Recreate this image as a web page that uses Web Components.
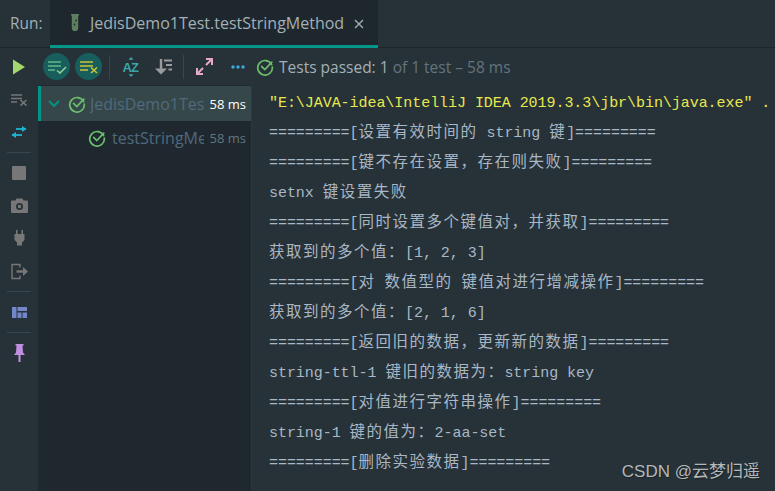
<!DOCTYPE html>
<html><head><meta charset="utf-8"><style>
html,body{margin:0;padding:0;background:#263238;overflow:hidden}
</style></head><body>
<run-panel>
<tab-bar label="Run:" title-text="JedisDemo1Test.testStringMethod"></tab-bar>
<tool-bar></tool-bar>
<side-rail></side-rail>
<test-tree>
<tree-row selected name="JedisDemo1Tes" time="58 ms"></tree-row>
<tree-row child name="testStringMe" time="58 ms"></tree-row>
</test-tree>
<console-view>
<c-line y>"E:\JAVA-idea\IntelliJ IDEA 2019.3.3\jbr\bin\java.exe" .</c-line>
<c-line>=========[设置有效时间的 string 键]=========</c-line>
<c-line>=========[键不存在设置，存在则失败]=========</c-line>
<c-line>setnx 键设置失败</c-line>
<c-line>=========[同时设置多个键值对，并获取]=========</c-line>
<c-line>获取到的多个值：[1, 2, 3]</c-line>
<c-line>=========[对 数值型的 键值对进行增减操作]=========</c-line>
<c-line>获取到的多个值：[2, 1, 6]</c-line>
<c-line>=========[返回旧的数据，更新新的数据]=========</c-line>
<c-line>string-ttl-1 键旧的数据为：string key</c-line>
<c-line>=========[对值进行字符串操作]=========</c-line>
<c-line>string-1 键的值为：2-aa-set</c-line>
<c-line>=========[删除实验数据]=========</c-line>
</console-view>
<water-mark>CSDN @云梦归遥</water-mark>
</run-panel>
<script>
const ICONS={
check:(c)=>`<svg width="18" height="18" viewBox="0 0 18 18" fill="none"><path d="M15.6 6.6A7.3 7.3 0 1 0 16.3 9" stroke="${c}" stroke-width="1.7" stroke-linecap="round"/><path d="M5.6 8.4l3.2 3.2 7-7.4" stroke="${c}" stroke-width="1.7" stroke-linecap="round"/></svg>`
};
function def(name,css,html){
 customElements.define(name,class extends HTMLElement{
  connectedCallback(){ if(this.shadowRoot)return;
   const r=this.attachShadow({mode:'open'});
   r.innerHTML=`<style>${css}</style>`+(typeof html==='function'?html(this):html);
  }
 });
}
def('run-panel',`:host{display:grid;grid-template-columns:38px 214px 1fr;grid-template-rows:48px 37px 406px;width:775px;height:491px;position:relative;overflow:hidden;background:#263238;font-family:"Open Sans","Noto Sans CJK SC",sans-serif}`,`<slot></slot>`);
def('tab-bar',`:host{display:flex;grid-column:1/4;background:#263238;border-bottom:1px solid #1d262b;box-sizing:border-box;height:48px;color:#a7b2b8;font-size:16px}
 .l{width:50px;box-sizing:border-box;padding-left:10px;display:flex;align-items:center;height:47px;color:#a4b0b6;font-size:15.400px}
 .t{width:328px;height:48px;box-sizing:border-box;background:#1e272d;border-bottom:3px solid #009688;display:flex;align-items:center;padding:0 0 0 21px;color:#a4b0b6}
 svg{margin-right:11px;flex:none}`,
 e=>`<div class="l">${e.getAttribute('label')}</div><div class="t"><svg width="8" height="17" viewBox="0 0 8 17"><path d="M0 0h8v1.500H7.200V14a3.200 3.200 0 0 1-6.400 0V1.500H0z" fill="#5f7d5f"/><circle cx="5" cy="6.500" r="1" fill="#2b3a33"/><circle cx="3.500" cy="10.500" r="1" fill="#2b3a33"/></svg><span>${e.getAttribute('title-text')}</span><svg style="margin:2px 0 0 10px" width="10" height="10" viewBox="0 0 10 10"><path d="M1 1l8 8M9 1l-8 8" stroke="#a4b0b6" stroke-width="1.300"/></svg></div>`);
def('tool-bar',`:host{display:flex;grid-column:1/4;align-items:center;height:37px;background:#263238;box-sizing:border-box;padding-left:10px;color:#a7b2b8;font-size:15.500px;white-space:nowrap}
 .b{flex:none;display:flex;align-items:center;justify-content:center}
 .c{width:27px;height:27px;border-radius:50%;background:#185e5d}
 .s{width:1px;height:24px;background:#37474f;flex:none}
 .m{color:#62747e}`,
 `<div class="b" style="width:18px"><svg width="14" height="16" viewBox="0 0 14 16"><path d="M1 .5 13 8 1 15.500z" fill="#a4d86c"/></svg></div>
 <div class="b c" style="margin-left:15px"><svg width="20" height="14" viewBox="0 0 20 14" fill="none"><path d="M1 2h13M1 6h13M1 10h7" stroke="#63b88a" stroke-width="1.600"/><path d="M10 10.500l3 2.500 6-6" stroke="#8fd08f" stroke-width="1.600"/></svg></div>
 <div class="b c" style="margin-left:5px"><svg width="20" height="14" viewBox="0 0 20 14" fill="none"><path d="M1 2h13M1 6h13M1 10h8" stroke="#cfc234" stroke-width="1.600"/><path d="M12 7.500l6 5.500M18 7.500l-6 5.500" stroke="#cfc234" stroke-width="1.600"/></svg></div>
 <div class="s" style="margin-left:7px"></div>
 <div class="b" style="width:18px;margin-left:12px"><svg width="17" height="20" viewBox="0 0 17 20"><path d="M8 0 10.500 2.800H5.500zM8 20 5.500 17.200H10.500z" fill="#3aa5ab"/><text x="-.5" y="15" font-family="Liberation Sans" font-weight="700" font-size="13" fill="#3aa5ab">A</text><text x="8" y="15" font-family="Liberation Sans" font-weight="700" font-size="13" fill="#3aa5ab">Z</text></svg></div>
 <div class="b" style="width:20px;margin-left:14px"><svg width="18" height="16" viewBox="0 0 18 16" fill="none"><path d="M6 0v12" stroke="#9a9a9a" stroke-width="2.400"/><path d="M0 9.500h12L6 15.500z" fill="#9a9a9a"/><path d="M9 1.500h8M11 6h6M13.500 10.500h3.500" stroke="#9a9a9a" stroke-width="2"/></svg></div>
 <div class="s" style="margin-left:9px"></div>
 <div class="b" style="width:18px;margin-left:11px"><svg width="17" height="17" viewBox="0 0 17 17" fill="none"><path d="M10 1h6v6M16 1 10 7" stroke="#e8a9c4" stroke-width="2"/><path d="M7 16H1v-6M1 16l6-6" stroke="#e8a9c4" stroke-width="2"/></svg></div>
 <div class="b" style="width:16px;margin-left:17px"><svg width="14" height="4" viewBox="0 0 14 4"><circle cx="2" cy="2" r="1.700" fill="#3fa9e0"/><circle cx="7" cy="2" r="1.700" fill="#3fa9e0"/><circle cx="12" cy="2" r="1.700" fill="#3fa9e0"/></svg></div>
 <div class="b" style="margin-left:10px;width:18px">${ICONS.check('#6cbf6c')}</div>
 <span style="margin-left:5px;color:#a4b0b6">Tests passed: <span>1</span> <span class="m">of 1 test – 58 ms</span></span>`);
def('side-rail',`:host{display:flex;flex-direction:column;align-items:center;background:#263238;box-sizing:border-box;padding-top:5px;width:38px}
 .b{height:20px;display:flex;align-items:center;justify-content:center;flex:none}
 .s{width:24px;height:1px;background:#37474f;flex:none}`,
 `<div class="b"><svg width="17" height="12" viewBox="0 0 17 12" fill="none"><path d="M0 1h11M0 4.500h11M0 8h6" stroke="#777" stroke-width="1.400"/><path d="M9.500 6l6 5.500M15.500 6l-6 5.500" stroke="#777" stroke-width="1.600"/></svg></div>
 <div class="b" style="margin-top:12px"><svg width="16" height="12" viewBox="0 0 16 12" fill="none"><path d="M5 3h10" stroke="#1cb4d0" stroke-width="1.800"/><path d="M11 0l4.500 3L11 6z" fill="#1cb4d0"/><path d="M1 9h10" stroke="#1cb4d0" stroke-width="1.800"/><path d="M5 6 .500 9 5 12z" fill="#1cb4d0"/></svg></div>
 <div class="s" style="margin-top:10px"></div>
 <div class="b" style="margin-top:10px"><div style="width:14px;height:14px;background:#777;border-radius:1px"></div></div>
 <div class="b" style="margin-top:12px"><svg width="17" height="15" viewBox="0 0 17 15"><path fill-rule="evenodd" d="M1 2.500h3.500L5.500.500h6l1 2h3.500a1 1 0 0 1 1 1V14a1 1 0 0 1-1 1H1a1 1 0 0 1-1-1V3.500a1 1 0 0 1 1-1zM8.500 5a3.500 3.500 0 1 0 0 7 3.500 3.500 0 0 0 0-7zm0 1.700a1.800 1.800 0 1 1 0 3.600 1.800 1.800 0 0 1 0-3.600z" fill="#777"/></svg></div>
 <div class="b" style="margin-top:13px"><svg width="11" height="16" viewBox="0 0 11 16"><path d="M2 0h1.500v4h4V0H9v4h1.500v6L8 12.500V15.500H3V12.500L.500 10V4H2z" fill="#777"/></svg></div>
 <div class="b" style="margin-top:13px"><svg width="17" height="17" viewBox="0 0 17 17" fill="none"><path d="M9 4.500V1.500H1v14h8v-3" stroke="#777" stroke-width="1.400"/><path d="M5.500 8.500h7" stroke="#777" stroke-width="2.400"/><path d="M12 4l5 4.500-5 4.500z" fill="#777"/></svg></div>
 <div class="s" style="margin-top:10px"></div>
 <div class="b" style="margin-top:10px"><svg width="15" height="11" viewBox="0 0 15 11" fill="#7286c8"><rect width="4.500" height="11"/><rect x="5.500" width="9.500" height="4"/><rect x="5.500" y="5.500" width="4" height="5.500"/><rect x="10.500" y="5.500" width="4.500" height="5.500"/></svg></div>
 <div class="s" style="margin-top:10px"></div>
 <div class="b" style="margin-top:10px"><svg width="11" height="18" viewBox="0 0 11 18"><path d="M1.500 0h8v1.500H8.500L9 8.500 11 11H.0L2 8.500 2.500 1.500H1.500zM4.500 11h2v7h-2z" fill="#c18fe0"/></svg></div>`);
def('test-tree',`:host{display:block;background:#1f282e;border-right:1px solid #2b393f;box-sizing:border-box;width:214px;padding-top:1px;overflow:hidden}`,`<slot></slot>`);
def('tree-row',`:host{display:flex;align-items:center;height:35px;box-sizing:border-box;font-size:16px;white-space:nowrap}
 :host([selected]){background:#36474a;border-left:3px solid #009688;padding-left:7px}
 :host([child]){padding-left:50px;height:34px}
 .n{color:#4f6a7c;flex:1;overflow:hidden;margin-left:4px;min-width:0}
 .t{color:#fff;font-size:13px;margin:0 5px 0 6px;flex:none}
 :host([child]) .t{color:#61757f}
 :host([child]) .n{margin-left:6px}`,
 e=>{const ch=e.hasAttribute('child');return `${ch?'':`<svg width="12" height="8" viewBox="0 0 12 8" fill="none" style="margin-right:8px"><path d="M1 1l5 5 5-5" stroke="#009688" stroke-width="1.800"/></svg>`}${ICONS.check('#6cbf6c')}<span class="n">${e.getAttribute('name')}</span><span class="t">${e.getAttribute('time')}</span>`});
def('console-view',`:host{display:block;background:#263238;padding:4px 0 0 17px;box-sizing:border-box;overflow:hidden}`,`<slot></slot>`);
customElements.define('c-line',class extends HTMLElement{
 connectedCallback(){ if(this.shadowRoot)return;
  const r=this.attachShadow({mode:'open'});
  const t=this.textContent;
  const esc=s=>s.replace(/&/g,'&amp;').replace(/</g,'&lt;');
  const parts=t.split(/([\u3000-\u9fff\uff00-\uffef]+)/).map((p,i)=>i%2?`<span class="z">${esc(p)}</span>`:esc(p)).join('');
  r.innerHTML=`<style>:host{display:block;height:30px;line-height:30px;white-space:pre;font-family:"Liberation Mono",monospace;font-size:15px;letter-spacing:-.05px;color:#a9b7c6}
  :host([y]){color:#e8e84e}
  .z{font-family:"Noto Sans CJK SC",sans-serif;font-size:15.500px;letter-spacing:1.500px;line-height:0}</style>${parts}`;
 }
});
def('water-mark',`:host{position:absolute;right:15px;bottom:9px;font-family:"Liberation Sans","Noto Sans CJK SC",sans-serif;font-size:17px;color:#b4b8ba;text-shadow:1px 1px 1px rgba(0,0,0,.3)}`,`<slot></slot>`);
</script>
</body></html>
